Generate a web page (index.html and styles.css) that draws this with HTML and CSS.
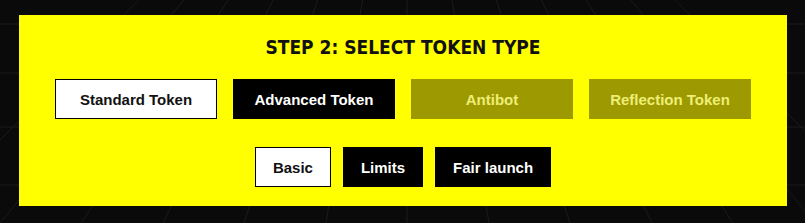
FILE: index.html
```html
<!DOCTYPE html>
<html lang="en">
<head>
  <meta charset="UTF-8" />
  <meta name="viewport" content="width=device-width, initial-scale=1.0"/>
  <title>Select Token Type</title>
  <link rel="stylesheet" href="styles.css">
</head>
<body>

  <!-- perspective floor behind the card -->
  <svg class="grid-bg" viewBox="0 0 805 223" preserveAspectRatio="none">
    <g stroke="#1b1b1b" stroke-width="1">
      <line x1="0" y1="24" x2="805" y2="24"/>
      <line x1="0" y1="73" x2="805" y2="73"/>
      <line x1="0" y1="127" x2="805" y2="127"/>
      <line x1="0" y1="185" x2="805" y2="185"/>
      <line x1="407" y1="-271" x2="-82" y2="223"/>
      <line x1="407" y1="-271" x2="0" y2="223"/>
      <line x1="407" y1="-271" x2="81" y2="223"/>
      <line x1="407" y1="-271" x2="163" y2="223"/>
      <line x1="407" y1="-271" x2="244" y2="223"/>
      <line x1="407" y1="-271" x2="326" y2="223"/>
      <line x1="407" y1="-271" x2="407" y2="223"/>
      <line x1="407" y1="-271" x2="489" y2="223"/>
      <line x1="407" y1="-271" x2="570" y2="223"/>
      <line x1="407" y1="-271" x2="652" y2="223"/>
      <line x1="407" y1="-271" x2="733" y2="223"/>
      <line x1="407" y1="-271" x2="815" y2="223"/>
      <line x1="407" y1="-271" x2="896" y2="223"/>
    </g>
  </svg>

  <div class="card">
    <h2 class="step-title">STEP 2: SELECT TOKEN TYPE</h2>

    <div class="type-row">
      <button class="opt selected">Standard Token</button>
      <button class="opt">Advanced Token</button>
      <button class="opt disabled">Antibot</button>
      <button class="opt disabled">Reflection Token</button>
    </div>

    <div class="sub-row">
      <button class="opt small selected">Basic</button>
      <button class="opt small">Limits</button>
      <button class="opt small">Fair launch</button>
    </div>
  </div>

</body>
</html>
```

FILE: styles.css
```css
* {
  box-sizing: border-box;
}

body {
  margin: 0;
  padding: 15px 18px 0 19px;
  background: #0a0a0a;
  font-family: 'Liberation Sans', Arial, sans-serif;
  min-height: 223px;
  overflow: hidden;
}

.grid-bg {
  position: fixed;
  top: 0;
  left: 0;
  width: 805px;
  height: 223px;
  z-index: 0;
}

.card {
  position: relative;
  z-index: 1;
  width: 768px;
  height: 191px;
  background: #ffff00;
  padding-top: 20px;
}

.step-title {
  margin: 0 0 20px;
  height: 24px;
  line-height: 24px;
  text-align: center;
  font-family: 'DejaVu Sans Condensed', sans-serif;
  font-size: 19px;
  font-weight: 700;
  color: #111;
}

.type-row {
  display: flex;
  justify-content: center;
  gap: 16px;
  margin-bottom: 28px;
}

.sub-row {
  display: flex;
  justify-content: center;
  gap: 12px;
}

.opt {
  height: 40px;
  width: 162px;
  border: 1px solid #000;
  background: #000;
  color: #fff;
  font-family: inherit;
  font-size: 15px;
  font-weight: 700;
  padding: 0;
  cursor: pointer;
}

.opt.selected {
  background: #fff;
  color: #111;
}

.opt.disabled {
  background: #9c9a00;
  border-color: #9c9a00;
  color: #eeee77;
  cursor: default;
}

.opt.small {
  width: auto;
  padding: 0 17px;
}
```
